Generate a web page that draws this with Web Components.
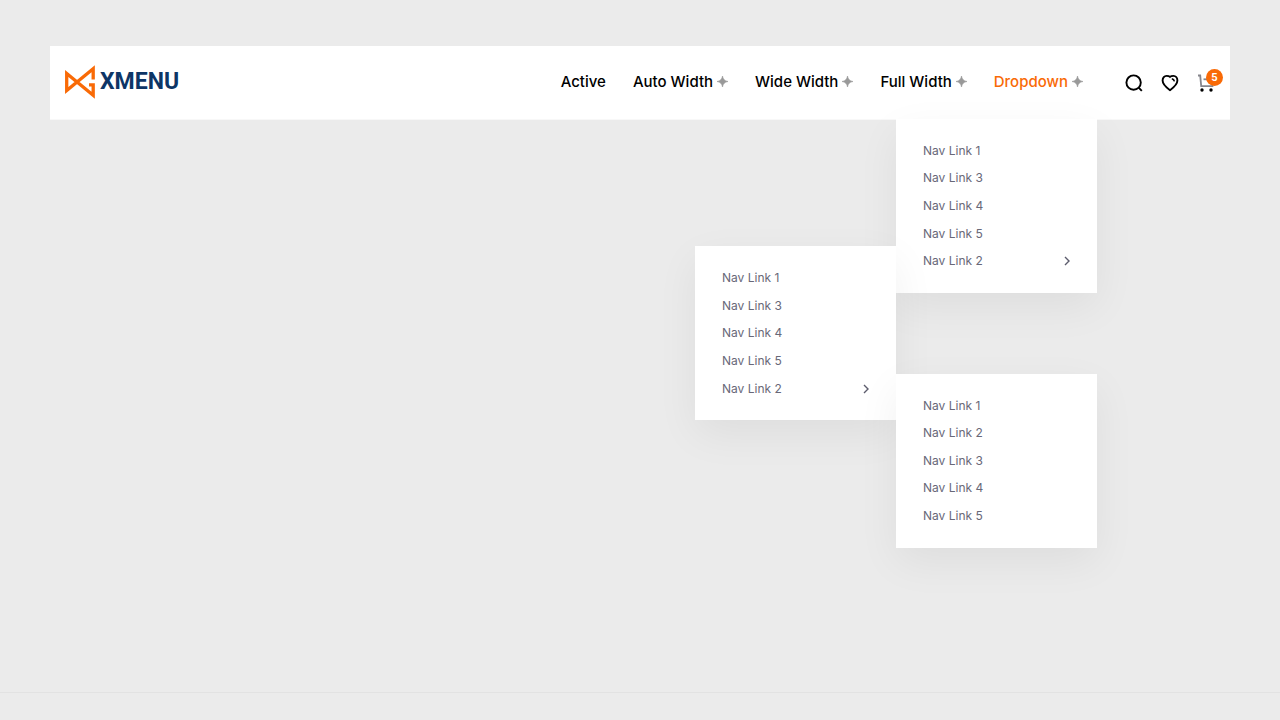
<!DOCTYPE html>
<html lang="en">
<head>
<meta charset="utf-8">
<title>XMENU</title>
<style>
  body { margin: 0; background: #ebebeb; font-family: "Inter", sans-serif; }
</style>
</head>
<body>
<x-page>
  <x-header slot="header">
    <x-logo slot="brand">XMENU</x-logo>
    <x-nav-item>Active</x-nav-item>
    <x-nav-item star>Auto Width</x-nav-item>
    <x-nav-item star>Wide Width</x-nav-item>
    <x-nav-item star>Full Width</x-nav-item>
    <x-nav-item star current>Dropdown
      <x-menu slot="menu">
        <x-menu-item>Nav Link 1</x-menu-item>
        <x-menu-item>Nav Link 3</x-menu-item>
        <x-menu-item>Nav Link 4</x-menu-item>
        <x-menu-item>Nav Link 5</x-menu-item>
        <x-menu-item side="left">Nav Link 2
          <x-menu slot="menu">
            <x-menu-item>Nav Link 1</x-menu-item>
            <x-menu-item>Nav Link 3</x-menu-item>
            <x-menu-item>Nav Link 4</x-menu-item>
            <x-menu-item>Nav Link 5</x-menu-item>
            <x-menu-item side="right">Nav Link 2
              <x-menu slot="menu">
                <x-menu-item>Nav Link 1</x-menu-item>
                <x-menu-item>Nav Link 2</x-menu-item>
                <x-menu-item>Nav Link 3</x-menu-item>
                <x-menu-item>Nav Link 4</x-menu-item>
                <x-menu-item>Nav Link 5</x-menu-item>
              </x-menu>
            </x-menu-item>
          </x-menu>
        </x-menu-item>
      </x-menu>
    </x-nav-item>
    <x-tool slot="tools" kind="search" label="Search"></x-tool>
    <x-tool slot="tools" kind="heart" label="Wishlist"></x-tool>
    <x-tool slot="tools" kind="cart" label="Cart">5</x-tool>
  </x-header>
</x-page>
<script>
function define(name, html, setup) {
  const template = document.createElement('template');
  template.innerHTML = html;
  customElements.define(name, class extends HTMLElement {
    connectedCallback() {
      if (this.shadowRoot) return;
      this.attachShadow({ mode: 'open' }).append(template.content.cloneNode(true));
      if (setup) setup(this, this.shadowRoot);
    }
  });
}

define('x-page', `
  <style>
    :host { display: flex; flex-direction: column; min-height: 100vh; }
    main { flex: 1; }
    footer { height: 27px; border-top: 1px solid #e2e2e2; }
  </style>
  <slot name="header"></slot><main></main><footer></footer>`);

define('x-header', `
  <style>
    :host { display: block; margin: 46px 50px 0; }
    header { display: flex; align-items: stretch; min-height: 73px; background: #fff; border-bottom: 1px solid #f8f8f8; padding: 0 15px; }
    .brand { display: flex; align-items: center; margin-right: auto; padding-bottom: 2px; }
    nav { display: flex; }
    .tools { display: flex; align-items: center; gap: 18px; margin-left: 29px; }
  </style>
  <header>
    <div class="brand"><slot name="brand"></slot></div>
    <nav aria-label="Main"><slot></slot></nav>
    <div class="tools"><slot name="tools"></slot></div>
  </header>`);

define('x-logo', `
  <style>
    :host { display: block; }
    a { display: flex; align-items: center; gap: 5px; color: #0d3566; text-decoration: none; font: 700 23px/32px "Roboto", sans-serif; }
    svg { display: block; }
  </style>
  <a href="#">
    <svg width="30" height="34" viewBox="0 0 30 34" fill="none" stroke="#f96a06" stroke-width="3.3" aria-hidden="true">
      <path d="M28.2 14.5V3.7L1.7 25.5V8.5L28.2 30.3V19.8H24"/>
    </svg>
    <span><slot></slot></span>
  </a>`);

define('x-nav-item', `
  <style>
    :host { display: flex; position: relative; }
    a { display: flex; align-items: center; gap: 4px; padding: 0 13px 2px 14px; color: #000; text-decoration: none; white-space: nowrap; font: 500 15px/20px "Inter", sans-serif; }
    :host([current]) a { color: #f96a06; }
    svg { display: none; fill: #999; }
    :host([star]) svg { display: block; }
    .drop { position: absolute; top: 100%; right: -1px; }
  </style>
  <a href="#"><span><slot></slot></span>
    <svg width="11" height="11" viewBox="0 0 11 11" aria-hidden="true"><path d="M5.5 0Q6.2 4.8 11 5.5Q6.2 6.2 5.5 11Q4.8 6.2 0 5.5Q4.8 4.8 5.5 0Z" stroke="#999" stroke-width=".6"/></svg>
  </a>
  <div class="drop"><slot name="menu"></slot></div>`);

define('x-menu', `
  <style>
    :host { display: grid; grid-auto-rows: 1fr; box-sizing: border-box; width: 201px; min-height: 174px; padding: 18px 0; background: #fff; box-shadow: 0 14px 40px rgba(0,0,0,.06); }
  </style>
  <slot></slot>`, host => host.setAttribute('role', 'list'));

define('x-menu-item', `
  <style>
    :host { display: grid; position: relative; }
    a { display: flex; align-items: center; justify-content: space-between; padding: 0 27px; color: #686878; text-decoration: none; white-space: nowrap; font: 400 12px/20px "Inter", sans-serif; }
    svg { display: none; }
    :host([side]) svg { display: block; }
    .sub { position: absolute; top: -1px; }
    :host([side="left"]) .sub { right: 100%; }
    :host([side="right"]) .sub { left: 100%; }
  </style>
  <a href="#"><span><slot></slot></span>
    <svg width="6" height="10" viewBox="0 0 6 10" fill="none" stroke="#5c5c6c" stroke-width="1.4" aria-hidden="true"><path d="M1 1L5 5L1 9"/></svg>
  </a>
  <div class="sub"><slot name="menu"></slot></div>`, host => host.setAttribute('role', 'listitem'));

const icons = {
  search: '<circle cx="8.6" cy="8.6" r="7.2"/><path d="M13.7 13.7L16.8 16.8"/>',
  heart: '<path d="M9 16.2C5.5 13.7 1.6 10.8 1.6 6.6C1.6 3.9 3.4 1.9 5.5 1.9C7 1.9 8.3 2.2 9 2.9C9.7 2.2 11 1.9 12.5 1.9C14.6 1.9 16.4 3.9 16.4 6.6C16.4 10.8 12.5 13.7 9 16.2Z"/><path d="M10.8 4.8Q12.9 5.2 13.4 7.4" stroke-width="1.6"/>',
  cart: '<g stroke="#85858c" stroke-width="1.8"><path d="M1 1.5H3.2L4.2 12.2H15.5L16.6 5"/><path d="M6.5 5.3H10"/></g><g fill="#000" stroke="none"><circle cx="5" cy="16" r="1.7"/><circle cx="14" cy="16" r="1.7"/></g>'
};

define('x-tool', `
  <style>
    :host { display: block; position: relative; }
    button { display: block; padding: 0; border: 0; background: none; }
    svg { display: block; fill: none; stroke: #000; stroke-width: 1.9; }
    .badge { display: none; position: absolute; top: -5px; right: -8px; width: 17px; height: 17px; border-radius: 50%; background: #f96a06; color: #fff; text-align: center; font: 700 10px/17px "Inter", sans-serif; }
    :host([kind="cart"]) .badge { display: block; }
  </style>
  <button type="button"><svg width="18" height="18" viewBox="0 0 18 18" aria-hidden="true"></svg><span class="badge"><slot></slot></span></button>`,
  (host, root) => {
    root.querySelector('svg').innerHTML = icons[host.getAttribute('kind')];
    root.querySelector('button').setAttribute('aria-label', host.getAttribute('label'));
  });
</script>
</body>
</html>
